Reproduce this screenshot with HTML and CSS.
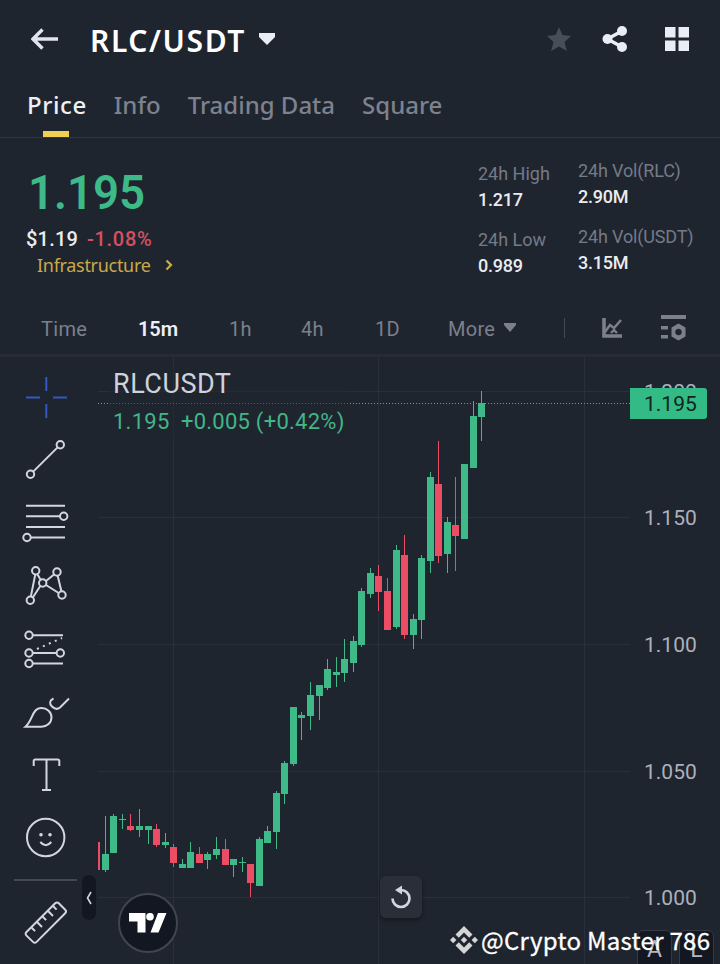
FILE: index.html
```html
<!DOCTYPE html>
<html lang="en">
<head>
  <meta charset="UTF-8" />
  <meta name="viewport" content="width=device-width, initial-scale=1.0"/>
  <title>RLC/USDT</title>
  <link rel="stylesheet" href="styles.css">
</head>
<body>
  <header class="header">
    <svg class="back" width="28" height="22" viewBox="0 0 28 22"><path d="M11.500 1.500L2 11l9.500 9.500M2.500 11H27" /></svg>
    <h1>RLC/USDT</h1>
    <svg class="caret" width="18" height="14" viewBox="0 0 18 14"><path d="M1 1h16v4L9 13 1 5z" /></svg>
    <div class="actions">
      <svg width="28" height="28" viewBox="0 0 28 28"><path class="star" d="M14 2l3.400 8 8.600.9-6.500 6 2.400 9.100L14 21.500 6.100 26l2.400-9.100L2 10.900l8.600-.9z" /></svg>
      <svg width="28" height="28" viewBox="0 0 28 28"><path class="share-line" d="M21 6L6.500 14 21 22" /><circle cx="21" cy="6" r="5" /><circle cx="6.500" cy="14" r="5" /><circle cx="21" cy="22" r="5" /></svg>
      <svg width="24" height="24" viewBox="0 0 24 24"><path d="M0 0h10.500v10.500H0zM13.500 0H24v10.500H13.500zM0 13.500h10.500V24H0zM13.500 13.500H24V24H13.500z" /></svg>
    </div>
  </header>

  <nav class="tabs">
    <div class="tab active">Price</div>
    <div class="tab">Info</div>
    <div class="tab">Trading Data</div>
    <div class="tab">Square</div>
  </nav>

  <section class="summary">
    <div class="quote">
      <div class="price">1.195</div>
      <div class="change"><span>$1.19</span><span class="down">-1.08%</span></div>
      <div class="category">Infrastructure
        <svg width="8" height="12" viewBox="0 0 8 12"><path d="M1.500 1.500L6 6l-4.500 4.500" /></svg>
      </div>
    </div>
    <div class="stats">
      <div class="stat"><label>24h High</label><b>1.217</b></div>
      <div class="stat"><label>24h Low</label><b>0.989</b></div>
    </div>
    <div class="stats volume">
      <div class="stat"><label>24h Vol(RLC)</label><b>2.90M</b></div>
      <div class="stat"><label>24h Vol(USDT)</label><b>3.15M</b></div>
    </div>
  </section>

  <div class="intervals">
    <span>Time</span>
    <span class="active">15m</span>
    <span>1h</span>
    <span>4h</span>
    <span>1D</span>
    <span>More <svg width="12" height="9" viewBox="0 0 12 9"><path d="M0 0h12v2L6 9 0 2z" /></svg></span>
    <i class="separator"></i>
    <svg width="20" height="20" viewBox="0 0 20 20"><path class="thick" d="M2 0v18h18" /><path class="thin" d="M3 14l5-7 4 3 7-8M9 15l3-3 3 3" /></svg>
    <svg width="25" height="26" viewBox="0 0 25 26"><path d="M0 0h25v4H0zM0 11h7v3.500H0zM0 20h7v3.500H0z" /><path fill-rule="evenodd" d="M17.500 8.500l7 4v9l-7 4-7-4v-9zM17.500 13.700a3.300 3.300 0 1 0 .01 0z" /></svg>
  </div>

  <main class="chart">
    <aside class="tools">
      <svg class="tool cross" viewBox="0 0 48 48"><path d="M24.300 4v14M24.300 31v14M4 24.500h14M31 24.500h14" /></svg>
      <svg class="tool" viewBox="0 0 48 48"><path d="M11.200 35.600l24.400-24.200" /><circle cx="38.300" cy="8.700" r="3.700" /><circle cx="8.500" cy="38.300" r="3.700" /></svg>
      <svg class="tool" viewBox="0 0 48 48"><path d="M4 6.700h39M4 17.300h34M4 28h39M9 38.500h34" /><circle cx="41.700" cy="17.300" r="3.700" /><circle cx="5" cy="38.500" r="3.700" /></svg>
      <svg class="tool" viewBox="0 0 48 48"><path d="M13.300 12.400L8.800 34.700M15.400 12.200l3.200 5.600M10.800 35.500l7.500-11.500M24 19l8-6.500M35.600 13.600l3.800 15.700M24 23l12.700 8" /><circle cx="13.700" cy="8.700" r="3.700" /><circle cx="35" cy="10" r="3.700" /><circle cx="20.700" cy="21" r="3.700" /><circle cx="8.300" cy="38.300" r="3.700" /><circle cx="40" cy="33" r="3.700" /></svg>
      <svg class="tool" viewBox="0 0 48 48"><path d="M11 10.300h30M11 28h24M11 38.500h30" /><path class="dots" d="M15 24l25-11" /><circle cx="7" cy="10.300" r="3.700" /><circle cx="7" cy="28" r="3.700" /><circle cx="38.300" cy="28" r="3.700" /><circle cx="7" cy="38.500" r="3.700" /></svg>
      <svg class="tool" viewBox="0 0 48 48"><path d="M3.500 38.700C11 32 10 20 19.500 20c5.500 0 10 4 10 9.200 0 5.500-4.500 9.500-10 9.500zM31.500 10.500c-4 2-4.500 5-1.500 8s5.500 3 8 1l9-9" /></svg>
      <svg class="tool" viewBox="0 0 48 48"><path d="M11.700 15V10q0-1.500 1.500-1.500h22.600q1.500 0 1.500 1.500v5M24.500 8.500V39M20 39h9" /></svg>
      <svg class="tool" viewBox="0 0 48 48"><circle cx="23.700" cy="23.500" r="18.700" /><path d="M18.300 28q5.500 6.500 11 0" /><circle class="eye" cx="19" cy="20.700" r="1.800" /><circle class="eye" cx="28" cy="20.700" r="1.800" /></svg>
      <hr>
      <svg class="tool ruler" viewBox="0 0 48 48"><path d="M4.500 34L33.200 5.300q1.800-1.800 3.600 0l6.400 6.400q1.800 1.800 0 3.600L14.600 43.900q-1.800 1.800-3.600 0l-6.500-6.300q-1.800-1.800 0-3.600zM9.500 29.500l3.600 3.600M15 24l5 5M20.500 18.500l3.600 3.600M26 13l5 5M31 8l3.600 3.600" /></svg>
    </aside>

    <div class="plot">
      <svg id="candles" width="622" height="607" viewBox="98 357 622 607">
        <path class="grid" d="M98 391.500H630M98 517.500H630M98 644.500H630M98 771.500H630M98 897.500H630M173.500 357V964M378.500 357V964M584.500 357V964" />
        <path class="last" d="M98 403.500H630" />
        <g class="axis">
          <text x="644" y="399">1.200</text>
          <text x="644" y="525">1.150</text>
          <text x="644" y="652">1.100</text>
          <text x="644" y="779">1.050</text>
          <text x="644" y="905">1.000</text>
        </g>
      </svg>
      <div class="legend">
        <div class="symbol">RLCUSDT</div>
        <div class="values">1.195&nbsp; +0.005 (+0.42%)</div>
      </div>
      <div class="last-price">1.195</div>
      <div class="collapse"><svg width="6" height="14" viewBox="0 0 6 14"><path d="M5 1L1.500 7 5 13" /></svg></div>
      <div class="logo"><svg width="38" height="20" viewBox="0 0 38 20"><path d="M0 0h16.500v19.500h-8v-11H0zM29 0h8.500l-8 19.500h-8z" /><circle cx="21" cy="3.700" r="3.800" /></svg></div>
      <div class="reset"><svg width="22" height="24" viewBox="0 0 22 24"><path d="M2.500 13.500A8.500 8.500 0 1 0 11 5" /><path class="head" d="M12 .5v9L5 5z" /></svg></div>
      <div class="scale-buttons"><span>A</span><span>L</span></div>
      <div class="watermark">
        <svg width="28" height="28" viewBox="0 0 28 28"><path d="M14 0l8.500 8.500-3.300 3.200L14 6.500l-5.200 5.200-3.300-3.200zM14 28l8.500-8.500-3.300-3.200-5.200 5.200-5.200-5.200-3.300 3.200zM3.200 10.800L6.400 14l-3.200 3.200L0 14zM24.800 10.800L28 14l-3.200 3.200-3.200-3.200zM14 10.800l3.200 3.200-3.200 3.200-3.200-3.200z" /></svg>
        <span>@Crypto Master 786</span>
      </div>
    </div>
  </main>

  <script src="script.js"></script>
</body>
</html>
```
FILE: styles.css
```css
* {
  box-sizing: border-box;
}

body {
  margin: 0;
  width: 720px;
  height: 964px;
  overflow: hidden;
  background: #1f252f;
  color: #eaecef;
  font-family: Roboto, "Liberation Sans", sans-serif;
}

svg {
  display: block;
  flex: none;
}

.header {
  display: flex;
  align-items: center;
  height: 77px;
  padding: 0 31px;
  fill: #e9edf6;
}

.back {
  fill: none;
  stroke: #e0e4ee;
  stroke-width: 3.4;
}

h1 {
  margin: 3px 13px 0 31px;
  width: 155px;
  font-family: "Noto Sans", sans-serif;
  font-size: 30px;
  font-weight: 600;
  letter-spacing: 1.6px;
  color: #fff;
}

.actions {
  display: flex;
  align-items: center;
  gap: 34px;
  margin-left: auto;
}

.actions svg:nth-child(2) {
  margin: 0 2px 0 -6px;
}

.star {
  fill: #474d59;
}

.share-line {
  fill: none;
  stroke: #e9edf6;
  stroke-width: 3.5;
}

.tabs {
  display: flex;
  gap: 27px;
  height: 61px;
  padding-left: 27px;
  border-bottom: 1px solid #303641;
  font-family: "Noto Sans", sans-serif;
  font-size: 24px;
  font-weight: 500;
  line-height: 55px;
  color: #7d828e;
}

.tab {
  position: relative;
}

.tab.active {
  letter-spacing: .6px;
  color: #eef0f6;
}

.tab.active::after {
  content: "";
  position: absolute;
  left: 16px;
  bottom: 0;
  width: 26px;
  height: 6px;
  background: #f0d052;
}

.summary {
  display: flex;
  height: 164px;
  padding-left: 26px;
}

.quote {
  width: 452px;
  padding-top: 27px;
}

.price {
  height: 59px;
  padding-left: 2px;
  font-size: 48px;
  font-weight: 600;
  line-height: 56px;
  color: #3dba87;
  transform: scaleX(.95);
  transform-origin: left;
}

.change {
  display: flex;
  gap: 9px;
  font-size: 20px;
  font-weight: 500;
  line-height: 30px;
  letter-spacing: .2px;
}

.down {
  letter-spacing: .7px;
  color: #d5505f;
}

.category {
  display: flex;
  align-items: center;
  gap: 14px;
  padding-left: 11px;
  font-family: "Noto Sans", sans-serif;
  font-size: 18px;
  line-height: 22px;
  letter-spacing: -.3px;
  color: #cba94a;
}

.category svg {
  fill: none;
  stroke: #d0ac43;
  stroke-width: 2.2;
}

.stats {
  width: 100px;
  padding-top: 23px;
}

.stats.volume {
  width: 130px;
  padding-top: 20px;
}

.stat {
  height: 66px;
  font-size: 18px;
  line-height: 26px;
}

.stat label {
  display: block;
  color: #747a86;
}

.volume label {
  letter-spacing: -.15px;
}

.stat b {
  font-weight: 500;
  letter-spacing: -.25px;
}

.intervals {
  display: grid;
  grid-template-columns: 97px 91px 72px 74px 73px 116px 38px 59px 25px;
  align-items: center;
  height: 52px;
  padding-left: 41px;
  font-size: 20px;
  letter-spacing: .3px;
  color: #7b808c;
}

.intervals .active {
  font-weight: 600;
  letter-spacing: -.1px;
  color: #eef0f6;
}

.intervals span {
  display: flex;
  align-items: center;
  gap: 9px;
  padding-top: 2px;
}

.intervals span svg {
  margin-top: -3px;
}

.intervals svg {
  fill: #7b808c;
}

.separator {
  width: 1px;
  height: 20px;
  background: #454b56;
}

.intervals .thick,
.intervals .thin {
  fill: none;
  stroke: #7b808c;
  stroke-width: 3.6;
}

.intervals .thin {
  stroke-width: 2.4;
}

.chart {
  display: flex;
  height: 610px;
  border-top: 3px solid #272b36;
}

.tools {
  width: 98px;
  padding: 8px 0 0 22px;
}

.tool {
  width: 48px;
  height: 48px;
  margin: 7.5px 0 15px;
  fill: none;
  stroke: #d3d6e0;
  stroke-width: 2;
}

.tool.cross {
  stroke: #3158c4;
}

.tool .dots {
  stroke-dasharray: 2 4.500;
}

.tool .eye {
  fill: #d3d6e0;
  stroke: none;
}

.tools hr {
  width: 63px;
  height: 2px;
  margin: 17px 0 17px -8px;
  border: 0;
  background: #434852;
}

.tool.ruler {
  margin: 0;
}

.plot {
  position: relative;
  width: 622px;
}

.grid {
  stroke: #2a303b;
}

.last {
  stroke: #4fb08c;
  stroke-dasharray: 1 2;
}

.up {
  fill: #3dba87;
}

.fall {
  fill: #ea4d64;
}

.axis {
  font-size: 21px;
  fill: #adb0ba;
}

.legend {
  position: absolute;
  left: 10px;
  top: 9px;
  padding: 0 5px;
  background: rgba(31, 37, 47, .5);
}

.symbol {
  font-size: 27px;
  line-height: 36px;
  letter-spacing: .5px;
  color: #cfd2dc;
}

.values {
  font-size: 22px;
  line-height: 40px;
  letter-spacing: .25px;
  color: #42b687;
}

.last-price {
  position: absolute;
  left: 532px;
  top: 31px;
  width: 77px;
  height: 31px;
  padding-left: 14px;
  border-radius: 0 3px 3px 0;
  background: #33bb85;
  font-size: 21px;
  line-height: 32px;
  color: #13231f;
}

.collapse,
.logo,
.reset {
  position: absolute;
  display: flex;
  align-items: center;
  justify-content: center;
}

.collapse {
  left: -16px;
  top: 518px;
  width: 14px;
  height: 45px;
  border-radius: 7px;
  background: #131722;
}

.collapse path {
  fill: none;
  stroke: #d3d6e0;
  stroke-width: 1.6;
}

.logo {
  left: 20px;
  top: 536px;
  width: 60px;
  height: 60px;
  border: 2px solid #42454f;
  border-radius: 50%;
  background: #131722;
  fill: #fff;
}

.reset {
  left: 282px;
  top: 519px;
  width: 42px;
  height: 42px;
  border-radius: 6px;
  background: #2a2e39;
  box-shadow: 0 2px 4px rgba(0, 0, 0, .4);
}

.reset path {
  fill: none;
  stroke: #d3d6e0;
  stroke-width: 2.6;
}

.reset .head {
  fill: #d3d6e0;
  stroke: none;
}

.scale-buttons {
  position: absolute;
  left: 539px;
  top: 573px;
  display: flex;
  gap: 7px;
}

.scale-buttons span {
  width: 35px;
  height: 40px;
  border: 1px solid #343945;
  border-radius: 6px;
  background: #131722;
  font-size: 23px;
  line-height: 37px;
  text-align: center;
  color: #b4b7c1;
}

.watermark {
  position: absolute;
  left: 352px;
  top: 565px;
  display: flex;
  align-items: center;
  gap: 3px;
  height: 36px;
  font-family: "Noto Sans CJK SC", sans-serif;
  font-size: 24px;
  font-weight: 400;
  letter-spacing: .3px;
  white-space: nowrap;
  color: #fff;
  fill: #d4d5d7;
}

.watermark span {
  margin-top: -2px;
  -webkit-text-stroke: .3px #fff;
}
```
FILE: script.js
```js
// center x, wick top, wick bottom, body top, body bottom, falling
const candles = [
  [105.5, 816, 872, 854, 870, 0],
  [113.5, 814, 853, 816, 853, 0],
  [122.5, 814, 829, 819, 820, 0],
  [130.5, 814, 831, 826, 830, 1],
  [139.5, 809, 837, 826, 830, 0],
  [148.5, 826, 844, 826, 830, 0],
  [156.5, 824, 847, 829, 845, 1],
  [165.5, 833, 848, 842, 845, 0],
  [173.5, 844, 867, 847, 863, 1],
  [182.5, 859, 868, 864, 868, 0],
  [190.5, 842, 868, 852, 868, 0],
  [199.5, 847, 863, 854, 863, 1],
  [207.5, 852, 869, 854, 860, 0],
  [216.5, 837, 859, 849, 855, 0],
  [225.5, 839, 865, 849, 865, 1],
  [233.5, 859, 877, 859, 865, 0],
  [242.5, 857, 872, 862, 863, 0],
  [250.5, 864, 897, 864, 883, 1],
  [259.5, 837, 886, 839, 886, 0],
  [267.5, 826, 843, 831, 843, 0],
  [276.5, 791, 849, 793, 832, 0],
  [284.5, 761, 804, 763, 794, 0],
  [293.5, 707, 766, 707, 764, 0],
  [301.5, 712, 740, 715, 718, 0],
  [310.5, 682, 730, 695, 716, 0],
  [319.5, 685, 720, 685, 696, 0],
  [327.5, 659, 690, 669, 688, 0],
  [336.5, 657, 687, 672, 675, 0],
  [344.5, 639, 682, 659, 673, 0],
  [353.5, 636, 672, 641, 663, 0],
  [361.5, 588, 647, 591, 645, 0],
  [370.5, 568, 598, 573, 594, 0],
  [378.5, 565, 611, 576, 592, 1],
  [387.5, 578, 630, 591, 630, 1],
  [396.5, 545, 629, 550, 627, 0],
  [404.5, 535, 639, 555, 635, 1],
  [413.5, 614, 649, 619, 635, 0],
  [421.5, 555, 639, 558, 620, 0],
  [430.5, 472, 573, 477, 561, 0],
  [438.5, 441, 563, 484, 556, 1],
  [447.5, 517, 573, 522, 554, 0],
  [455.5, 477, 571, 525, 536, 1],
  [464.5, 464, 539, 464, 539, 0],
  [473.5, 401, 468, 416, 468, 0],
  [481.5, 391, 441, 403, 417, 0]
];

const svg = document.getElementById('candles');

function bar(x, y, width, height, falling) {
  const rect = document.createElementNS('http://www.w3.org/2000/svg', 'rect');
  rect.setAttribute('x', x);
  rect.setAttribute('y', y);
  rect.setAttribute('width', width);
  rect.setAttribute('height', height);
  rect.setAttribute('class', falling ? 'fall' : 'up');
  svg.appendChild(rect);
}

// first candle is cut off by the left edge
bar(98, 842, 2, 28, 1);

candles.forEach(([x, high, low, top, bottom, falling]) => {
  bar(x - 0.5, high, 1, low - high, falling);
  bar(x - 3.5, top, 7, bottom - top, falling);
});
```
